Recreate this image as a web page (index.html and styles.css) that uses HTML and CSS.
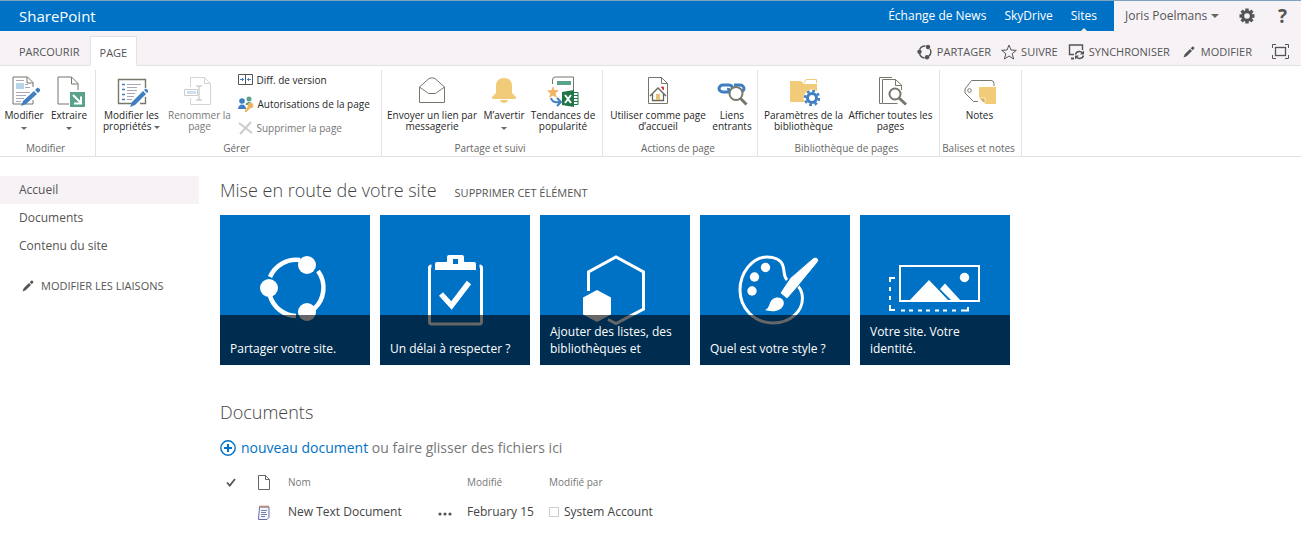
FILE: index.html
```html
<!DOCTYPE html>
<html lang="fr">
<head>
<meta charset="utf-8">
<title>SharePoint</title>
<link rel="stylesheet" href="styles.css">
</head>
<body>
<header class="suite">
  <div class="suite-blue">
    <span class="brand">SharePoint</span>
    <nav class="suite-links">
      <a href="#">Échange de News</a>
      <a href="#">SkyDrive</a>
      <a href="#" class="current">Sites</a>
    </nav>
  </div>
  <div class="suite-user">
    <button type="button" class="user">Joris Poelmans<span class="caret"></span></button>
    <button type="button" class="gear" aria-label="Paramètres">
      <svg width="16" height="16" viewBox="0 0 16 16"><path fill="#555" fill-rule="evenodd" d="M6.300 0.500h3.400v2l1 .4L12.200 1.400l2.400 2.400-1.500 1.500.4 1h2v3.400h-2l-.4 1 1.500 1.500-2.400 2.400-1.500-1.500-1 .4v2H6.300v-2l-1-.4-1.500 1.500-2.400-2.400 1.500-1.500-.4-1h-2V6.300h2l.4-1L1.400 3.800l2.400-2.400 1.500 1.500 1-.4zM8 5.200a2.800 2.800 0 1 0 0 5.600A2.800 2.800 0 0 0 8 5.200z"/></svg>
    </button>
    <button type="button" class="help" aria-label="Aide">?</button>
  </div>
</header>

<div class="tabs">
  <div class="tab-list">
    <button type="button" class="tab">PARCOURIR</button>
    <button type="button" class="tab active">PAGE</button>
  </div>
  <div class="actions">
    <button type="button"><svg width="16" height="16" viewBox="0 0 16 16" fill="none" stroke="#555" stroke-width="1.400"><path d="M2.600 5.500A6 6 0 0 1 8.500 2M13 5a6 6 0 0 1-1.500 7.500M7.500 14a6 6 0 0 1-5-4.500"/><g fill="#555" stroke="none"><circle cx="11" cy="3" r="2.200"/><circle cx="2.500" cy="7.800" r="2.200"/><circle cx="10" cy="13.200" r="2.200"/></g></svg>PARTAGER</button>
    <button type="button"><svg width="16" height="16" viewBox="0 0 16 16" fill="none" stroke="#555"><path d="M8 1l2 5 5.300.3-4.100 3.400 1.400 5.300L8 12l-4.600 3 1.400-5.300L.700 6.300 6 6z"/></svg>SUIVRE</button>
    <button type="button"><svg width="17" height="16" viewBox="0 0 17 16" fill="none" stroke="#555"><path d="M6 10.500H1.500v-9.500h13V6" stroke-width="1.400"/><path d="M3 14.500h3" stroke-width="2"/><path d="M7.500 10.500c1-3.500 6-4 7.500-.8M15.500 11.500c-1 3.500-6 4-7.500.8" stroke-width="1.500"/><path d="M16 6.500v4h-4zM7 15.500v-4h4z" fill="#555" stroke="none"/></svg>SYNCHRONISER</button>
    <button type="button" class="edit"><svg width="12" height="12" viewBox="0 0 12 12" fill="#555"><path d="M0.500 11.500l1.200-3.200L7 3l2 2-5.300 5.300zM7.700 2.300l1.600-1.500c.9-.7 2.600.8 1.900 1.900L9.700 4.300z"/></svg>MODIFIER</button>
    <button type="button" class="focus" aria-label="Focus"><svg width="17" height="15" viewBox="0 0 17 15" fill="none" stroke="#555"><rect x="3.500" y="3.500" width="10" height="8" stroke-width="1.300"/><path d="M.5 4V.5H4M13 .5h3.500V4M.5 11v3.500H4M16.500 11v3.500H13"/></svg></button>
  </div>
</div>

<div class="ribbon">
  <section class="group g-edit">
    <div class="commands">
      <button type="button" class="big">
        <svg width="32" height="32" viewBox="0 0 32 32" fill="none"><path d="M25 12V7.500L19.500 2H5v27h20v-4M19 2v6h6" stroke="#77776b"/><path d="M8 5.500h8M17 9.500h3M17 12.500h5M8 17.500h14M8 20.500h10M8 23.500h8M8 26.500h5" stroke="#aaa8b8"/><path d="M8 8h8v6H8z" fill="#b8d4ea"/><path d="M13 31l2-5L26 16l3 3-11 10zM27 15l2-2c1-1 4 1.500 3 3l-2 2z" fill="#3f7fc1"/></svg>
        <span>Modifier</span><i class="caret"></i>
      </button>
      <button type="button" class="big">
        <svg width="32" height="32" viewBox="0 0 32 32" fill="none"><path d="M25 15V8.500L18.500 2H5v27h11M18.500 2v7H25" stroke="#77776b"/><path d="M17 17h15v15H17z" fill="#5ba28a"/><path d="M20 20l7 7M28 21.500v7h-7" stroke="#fff" stroke-width="2"/></svg>
        <span>Extraire</span><i class="caret"></i>
      </button>
    </div>
    <h2>Modifier</h2>
  </section>
  <section class="group g-manage">
    <div class="commands">
      <button type="button" class="big">
        <svg width="32" height="32" viewBox="0 0 32 32" fill="none"><path d="M29.500 13V4.500h-27v24h14M24 28.500h5.500V22" stroke="#77776b" stroke-width="1.400"/><path d="M6 9.500h3M6 14.500h3M6 19.500h3M6 24.500h3" stroke="#3f7fc1" stroke-width="1.500"/><path d="M11 9.500h14M11 12.500h10M11 15.500h10M11 18.500h8M11 21.500h7M11 24.500h5" stroke="#aaa8b8"/><path d="M14 32l2-5 11-11 3 3-11 11zM28 15l1-1c1-1 4 1.500 3 3l-1 1z" fill="#3f7fc1"/></svg>
        <span>Modifier les<br>propriétés <i class="caret"></i></span>
      </button>
      <button type="button" class="big" disabled>
        <svg width="32" height="32" viewBox="0 0 32 32" fill="none" stroke="#d5d5d0"><path d="M6.500 12V2.500h14l6 6v21h-20V23M20.500 2.500v6h6"/><path d="M.5 14.500h13v6H.5z" stroke="#ccc"/><path d="M3 16h9v3H3z" fill="#cfdff0" stroke="none"/><path d="M12 11h6M12 25h6M15 11v14" stroke="#bbb"/></svg>
        <span>Renommer la<br>page</span>
      </button>
      <div class="small-list">
        <button type="button"><svg width="15" height="14" viewBox="0 0 15 14" fill="none"><path d="M.5 1.500h14v10H.5zM7.500 1.500v10" stroke="#555"/><path d="M2 6.500h4M4.500 5v3M9 6.500h4M10.500 5v3" stroke="#3f7fc1"/></svg>Diff. de version</button>
        <button type="button"><svg width="16" height="16" viewBox="0 0 16 16"><g fill="#5ba28a"><circle cx="11" cy="3" r="2.500"/><path d="M7.500 9c0-4 7-4 7 0z"/></g><g fill="#3f7fc1"><circle cx="4" cy="5" r="2.800"/><path d="M0 13c0-6 8-6 8 0z"/></g><g fill="#f0b45c"><circle cx="12.500" cy="9.500" r="2.800"/><path d="M10.500 10l2 2-4 4H7v-2z"/></g></svg>Autorisations de la page</button>
        <button type="button" disabled><svg width="15" height="14" viewBox="0 0 15 14" fill="none" stroke="#ccc" stroke-width="2"><path d="M1 2l13 10M13 1L2 13"/></svg>Supprimer la page</button>
      </div>
    </div>
    <h2>Gérer</h2>
  </section>
  <section class="group g-share">
    <div class="commands">
      <button type="button" class="big">
        <svg width="32" height="32" viewBox="0 0 32 32" fill="none" stroke="#77776b"><path d="M3.500 12v15.500h25V12L19 3.500q-3-1.500-6 0zM3.500 12l9 6.500h7l9-6.500"/></svg>
        <span>Envoyer un lien par<br>messagerie</span>
      </button>
      <button type="button" class="big">
        <svg width="32" height="32" viewBox="0 0 32 32" fill="#f1cb78"><path d="M16 3c5 0 8 3 8 8v7l4 4v2H4v-2l4-4v-7c0-5 3-8 8-8zM12 25h8c0 4-8 4-8 0z"/></svg>
        <span>M’avertir</span><i class="caret"></i>
      </button>
      <button type="button" class="big">
        <svg width="32" height="32" viewBox="0 0 32 32" fill="none"><path d="M5.500 9V5q0-3 3-3h18v13" stroke="#77776b"/><path d="M10 6h14v4H10z" fill="#5ba28a"/><path d="M6 11l1.500 4 4.500.3-3.500 3L10 23l-4-2.500L2 23l1.300-4.500L0 15.500l4.500-.5z" fill="#f1b56a"/><path d="M4 23c1 4 4 5 9 4M10 23l4 4-4 4" stroke="#3f7fc1" stroke-width="2"/><path d="M15 17l12-2v17l-12-2z" fill="#1f7547"/><path d="M27 17.500h4v12h-4M27 20.500h4M27 23.500h4M27 26.500h4" stroke="#1f7547"/><path d="M18 20l6 8M24 20l-6 8" stroke="#fff" stroke-width="2"/></svg>
        <span>Tendances de<br>popularité</span>
      </button>
    </div>
    <h2>Partage et suivi</h2>
  </section>
  <section class="group g-actions">
    <div class="commands">
      <button type="button" class="big">
        <svg width="32" height="32" viewBox="0 0 32 32" fill="none"><path d="M6.500 2.500h13l6 6v20h-19zM19.500 2.500v6h6" stroke="#77776b"/><path d="M8 21l8-8 8 8M10.500 19v6.500h11V19" stroke="#66665c" stroke-width="1.300"/><path d="M14 19h4v6h-4z" fill="#e9c178"/><path d="M19.500 12h2v3z" fill="#d33" stroke="#d33"/></svg>
        <span>Utiliser comme page<br>d’accueil</span>
      </button>
      <button type="button" class="big">
        <svg width="32" height="32" viewBox="0 0 32 32" fill="none"><g stroke="#3f7fc1" stroke-width="3"><path d="M13 17H7a4 3.500 0 0 1 0-7h6a4 3.500 0 0 1 3.500 3.500"/><path d="M12.500 13a4 3.500 0 0 0 4 4h3M18 10h6a4 3.500 0 0 1 0 7"/></g><circle cx="20" cy="18.500" r="6.500" fill="#fff" stroke="#77776b" stroke-width="2"/><path d="M24.500 23.500l6 6" stroke="#77776b" stroke-width="3"/></svg>
        <span>Liens<br>entrants</span>
      </button>
    </div>
    <h2>Actions de page</h2>
  </section>
  <section class="group g-library">
    <div class="commands">
      <button type="button" class="big">
        <svg width="32" height="32" viewBox="0 0 32 32"><path d="M2 6h11l3 3h13v18H2z" fill="#f1cb78"/><path d="M16 8l2-3.500h10.500V8" fill="#fff" stroke="#f1cb78"/><circle cx="24" cy="23" r="8.500" fill="#fff"/><circle cx="24" cy="23" r="4.500" fill="#fff" stroke="#3f7fc1" stroke-width="3"/><circle cx="24" cy="23" r="7" fill="none" stroke="#3f7fc1" stroke-width="2.500" stroke-dasharray="2.750 2.750"/></svg>
        <span>Paramètres de la<br>bibliothèque</span>
      </button>
      <button type="button" class="big">
        <svg width="32" height="32" viewBox="0 0 32 32" fill="none" stroke="#77776b"><path d="M17 2.500H4.500v26H7"/><path d="M26.500 15V10L20.500 4.500h-13v24h15M20.500 4.500v6h6"/><circle cx="20" cy="19" r="5.500" fill="#fff" stroke-width="2"/><path d="M24 23l7 6.500" stroke-width="3"/></svg>
        <span>Afficher toutes les<br>pages</span>
      </button>
    </div>
    <h2>Bibliothèque de pages</h2>
  </section>
  <section class="group g-notes">
    <div class="commands">
      <button type="button" class="big">
        <svg width="32" height="32" viewBox="0 0 32 32" fill="none" stroke="#77776b"><path d="M14 26.500H9.500L1 18v-4l6.500-8.500H27q3 0 3 3V11"/><circle cx="5.500" cy="15.500" r="1.800"/><path d="M15 12h17v17H21l-6-6z" fill="#f1cb78" stroke="none"/><path d="M15 23h6v6z" fill="#dba94f" stroke="#fff" stroke-width=".7"/></svg>
        <span>Notes</span>
      </button>
    </div>
    <h2>Balises et notes</h2>
  </section>
</div>

<div class="page">
  <nav class="side">
    <a href="#" class="selected">Accueil</a>
    <a href="#">Documents</a>
    <a href="#">Contenu du site</a>
    <button type="button" class="edit-links"><svg width="12" height="12" viewBox="0 0 12 12" fill="#555"><path d="M0.500 11.500l1.200-3.200L7 3l2 2-5.300 5.300zM7.700 2.300l1.600-1.500c.9-.7 2.600.8 1.900 1.900L9.700 4.300z"/></svg>MODIFIER LES LIAISONS</button>
  </nav>
  <main class="content">
    <div class="start">
      <h1>Mise en route de votre site</h1>
      <button type="button">SUPPRIMER CET ÉLÉMENT</button>
    </div>
    <div class="tiles">
      <a href="#" class="tile">
        <svg viewBox="0 0 150 150"><path d="M50 62A28.500 28.500 0 0 1 80 45M98 56A28.500 28.500 0 0 1 94 94M76 101A28.500 28.500 0 0 1 50 81" fill="none" stroke="#fff" stroke-width="4.500"/><g fill="#fff"><circle cx="87" cy="50" r="9"/><circle cx="49" cy="73" r="9"/><circle cx="87" cy="97" r="9"/></g></svg>
        <span class="caption">Partager votre site.</span>
      </a>
      <a href="#" class="tile">
        <svg viewBox="0 0 150 150"><path d="M51.500 51q-2 0-2 2v54q0 2 2 2h48q2 0 2-2V53q0-2-2-2" fill="none" stroke="#fff" stroke-width="3"/><path fill="#fff" stroke="#0072c6" stroke-width="1" d="M54.500 55.500V49q0-2.500 2.500-2.500h9.500V42q0-2.500 2.500-2.500h13q2.500 0 2.500 2.500v4.500H94q2.500 0 2.500 2.500v6.500z"/><path d="M73 44h5v5h-5z" fill="#0072c6"/><path d="M61 79l10.500 11.500L89 67.500" fill="none" stroke="#fff" stroke-width="5.500"/></svg>
        <span class="caption">Un délai à respecter ?</span>
      </a>
      <a href="#" class="tile">
        <svg viewBox="0 0 150 150"><path d="M48.500 76V57L76 42l27.500 15v37L76 108.500l-8-4" fill="none" stroke="#fff" stroke-width="3"/><path d="M57 75l14 7.500v17L57 107l-14-7.500v-17z" fill="#fff"/></svg>
        <span class="caption">Ajouter des listes, des bibliothèques et</span>
      </a>
      <a href="#" class="tile">
        <svg viewBox="0 0 150 150"><path d="M87 65c-4-4-2-8-4-14-2-7-10-9-16-9-15 0-27 16-27 33 0 18 14 33 33 33 17 0 32-12 29-29q-1-5-5-9" fill="none" stroke="#fff" stroke-width="3"/><g fill="#fff"><circle cx="65.500" cy="52.500" r="4.700"/><circle cx="54.500" cy="62" r="4.700"/><circle cx="52" cy="76" r="4.700"/><path d="M90 63l23-20c3-2 7 1 5 4L95 75l-8 9-7-6z" stroke="#0072c6"/><path d="M65 95c6-2 3-10 10-12 6-2 11 3 8 8-3 6-12 6-18 4z"/></g></svg>
        <span class="caption">Quel est votre style ?</span>
      </a>
      <a href="#" class="tile">
        <svg viewBox="0 0 150 150" fill="none" stroke="#fff"><path d="M40 51h79v35H40z" stroke-width="2"/><g fill="#fff" stroke="none"><circle cx="104.500" cy="62.500" r="4.700"/><path d="M49 86l20-21 20 21zM80 74l5-5.500L101 86h-9z"/></g><path d="M35 63h-5v4M30 72v4M30 81v4M30 90v5h5M41 95.500h4M49 95.500h4M58 95.500h4M66 95.500h4M75 95.500h4M83 95.500h4M92 95.500h4M101 95.500h7V92" stroke-width="2"/></svg>
        <span class="caption">Votre site. Votre identité.</span>
      </a>
    </div>
    <h2 class="doc-title">Documents</h2>
    <p class="new-doc">
      <svg width="16" height="16" viewBox="0 0 16 16" fill="none" stroke="#0072c6"><circle cx="8" cy="8" r="7.200" stroke-width="1.400"/><path d="M8 4v8M4 8h8" stroke-width="2"/></svg>
      <span><a href="#">nouveau document</a> ou faire glisser des fichiers ici</span>
    </p>
    <table class="docs">
      <thead>
        <tr>
          <th class="c-check"><svg width="10" height="9" viewBox="0 0 10 9" fill="none" stroke="#555" stroke-width="1.800"><path d="M1 4.500l2.800 3L9 1"/></svg></th>
          <th class="c-icon"><svg width="12" height="15" viewBox="0 0 12 15" fill="none" stroke="#666"><path d="M.5 .5h7l4 4v10H.5zM7.500 .5v4h4"/></svg></th>
          <th class="c-name">Nom</th>
          <th class="c-more"></th>
          <th class="c-date">Modifié</th>
          <th>Modifié par</th>
        </tr>
      </thead>
      <tbody>
        <tr>
          <td></td>
          <td class="c-icon"><svg width="12" height="15" viewBox="0 0 12 15"><path d="M1.500 2h9.500v10.500L9 14.500H.5z" fill="#f4f6ff" stroke="#6a6aa8"/><path d="M1.500 1.500h10" stroke="#b5702c" stroke-width="2" stroke-dasharray="1 1"/><path d="M3 5.500h6M3 7.500h5M3 9.500h6M3 11.500h4" stroke="#7780a5"/></svg></td>
          <td><a href="#">New Text Document</a></td>
          <td class="c-more"><button type="button" aria-label="Menu"><svg width="14" height="4" viewBox="0 0 14 4" fill="#555"><circle cx="2" cy="2" r="1.600"/><circle cx="7" cy="2" r="1.600"/><circle cx="12" cy="2" r="1.600"/></svg></button></td>
          <td>February 15</td>
          <td><span class="presence"></span><a href="#">System Account</a></td>
        </tr>
      </tbody>
    </table>
  </main>
</div>
</body>
</html>
```

FILE: styles.css
```css
* { box-sizing: border-box; }
body {
  margin: 0;
  background: #fff;
  color: #444;
  font: 12px/16px "Open Sans", "Noto Sans", sans-serif;
}
a { color: inherit; text-decoration: none; }
button {
  margin: 0;
  padding: 0;
  border: 0;
  background: none;
  color: inherit;
  font: inherit;
}
h1, h2, p { margin: 0; font-weight: 400; }
svg { display: block; flex: none; }
.caret {
  display: inline-block;
  border: 3px solid transparent;
  border-top-color: #666;
  border-bottom: 0;
}

/* Suite bar */
.suite {
  display: flex;
  height: 31px;
  border-top: 1px solid #7fa3bd;
  background: #f6f2f6;
}
.suite-blue {
  flex: 1;
  display: flex;
  justify-content: space-between;
  padding: 0 17px 0 19px;
  background: #0072c6;
  color: #fff;
  line-height: 30px;
}
.brand { font-size: 15px; }
.suite-links { display: flex; gap: 18px; }
.current { position: relative; }
.current::after {
  content: "";
  position: absolute;
  left: 50%;
  bottom: 0;
  margin-left: -3px;
  border: 3px solid transparent;
  border-bottom-color: #f6f2f6;
  border-top: 0;
}
.suite-user {
  display: flex;
  align-items: center;
  width: 187px;
  padding: 0 14px 0 11px;
  color: #555;
}
.user { display: flex; align-items: center; gap: 4px; white-space: nowrap; }
.user .caret { border-width: 4px 4px 0; }
.gear { margin-left: auto; }
.help { margin-left: 23px; font-size: 19px; font-weight: 700; }

/* Tab row */
.tabs {
  display: flex;
  justify-content: space-between;
  height: 35px;
  border-bottom: 1px solid #e3e1e6;
  background: #f6f2f6;
  color: #555;
  font-size: 11px;
}
.tab-list { display: flex; align-items: flex-end; padding-left: 9px; }
.tab { height: 30px; padding: 4px 9px 0; border: 1px solid transparent; }
.tab.active {
  margin-bottom: -1px;
  border-color: #e3e1e6;
  border-bottom-color: #fff;
  background: #fff;
}
.actions { display: flex; align-items: center; gap: 10px; padding: 7px 12px 0 0; }
.actions button { display: flex; align-items: center; gap: 4px; }
.actions .edit { gap: 6px; margin-left: 3px; }
.actions .focus { margin-left: 10px; }

/* Ribbon */
.ribbon {
  display: flex;
  height: 91px;
  padding-top: 4px;
  border-bottom: 1px solid #e3e1e6;
  font-size: 11px;
}
.group {
  display: flex;
  flex-direction: column;
  justify-content: space-between;
  border-right: 1px solid #e3e1e6;
  white-space: nowrap;
}
.group h2 {
  padding-right: 4px;
  color: #666;
  font-size: 10px;
  line-height: 16px;
  text-align: center;
}
.commands { display: grid; justify-content: center; align-items: start; padding: 5px 2px 0 0; }
.g-edit { width: 96px; }
.g-manage { width: 286px; }
.g-share { width: 221px; }
.g-actions { width: 155px; }
.g-library { width: 182px; }
.g-notes { width: 82px; }
.g-edit .commands { grid-template-columns: 45px 45px; }
.g-manage .commands { grid-template-columns: 66px 70px 142px; }
.g-share .commands { grid-template-columns: 98px 46px 72px; }
.g-actions .commands { grid-template-columns: 106px 42px; }
.g-library .commands { grid-template-columns: 86px 88px; }
.big {
  display: flex;
  flex-direction: column;
  align-items: center;
  color: #262626;
  font-size: 10px;
  line-height: 11px;
}
.big span { margin-top: 3px; }
.big > .caret { margin-top: 6px; }
.big .caret { vertical-align: middle; }
button:disabled { color: #777; }
.small-list { display: flex; flex-direction: column; gap: 8px; padding-left: 3px; margin-top: -3px; }
.small-list button {
  display: flex;
  align-items: center;
  gap: 4px;
  height: 16px;
  color: #262626;
  font-size: 10px;
}
.small-list button:disabled { color: #777; }

/* Page body */
.page { display: flex; padding-top: 19px; }
.side { width: 199px; margin-right: 20px; color: #555; }
.side a { display: block; height: 28px; padding-left: 19px; line-height: 28px; }
.side .selected { background: #f6f2f6; }
.edit-links {
  display: flex;
  align-items: center;
  gap: 7px;
  margin-top: 18px;
  padding-left: 22px;
  font-size: 11px;
}
.content { flex: 1; padding-left: 1px; }
.start { display: flex; align-items: baseline; gap: 18px; line-height: 28px; }
.start h1, .doc-title { font-size: 18px; font-weight: 300; }
.start button { color: #555; font-size: 11px; }
.tiles { display: flex; flex-wrap: wrap; gap: 10px; margin-top: 8px; }
.tile {
  position: relative;
  width: 150px;
  height: 150px;
  background: #0072c6;
  color: #fff;
}
.caption {
  position: absolute;
  inset: auto 0 0;
  display: flex;
  align-items: flex-end;
  height: 50px;
  padding: 0 10px 8px;
  background: rgba(0, 0, 0, 0.6);
  line-height: 17px;
}
.doc-title { margin-top: 34px; line-height: 26px; }
.new-doc {
  display: flex;
  align-items: center;
  gap: 5px;
  margin-top: 12px;
  color: #777;
  font-size: 14px;
  line-height: 22px;
}
.new-doc a { color: #0072c6; }
.docs { margin-top: 9px; border-collapse: collapse; }
.docs th {
  height: 28px;
  padding: 0;
  color: #777;
  font-size: 10px;
  font-weight: 400;
  text-align: left;
}
.docs td { height: 32px; padding: 0; white-space: nowrap; }
.docs .c-check { width: 38px; padding-left: 6px; }
.docs .c-icon { width: 30px; }
.docs .c-name { width: 150px; }
.docs .c-more { width: 29px; }
.docs .c-date { width: 82px; }
.presence {
  display: inline-block;
  width: 10px;
  height: 10px;
  margin-right: 5px;
  border: 1px solid #ccc;
  vertical-align: -1px;
}
```
